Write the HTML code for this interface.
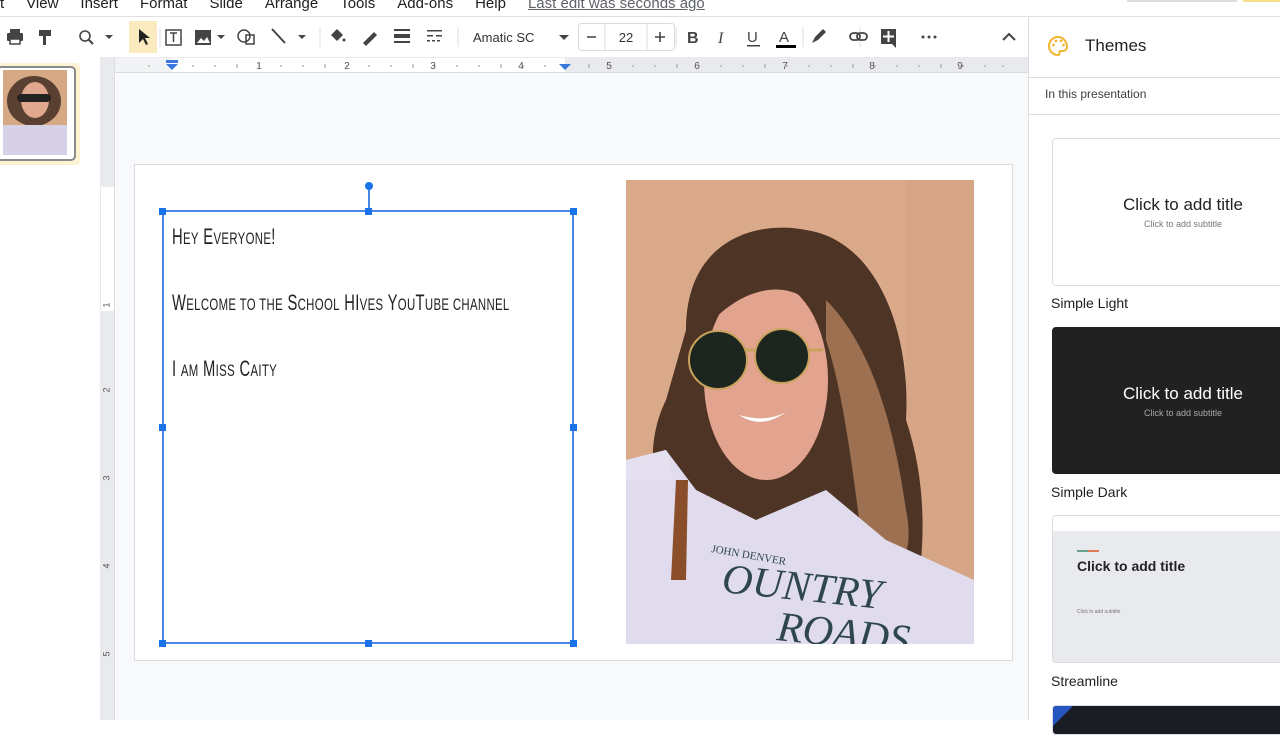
<!DOCTYPE html>
<html><head><meta charset="utf-8"><style>
*{margin:0;padding:0;box-sizing:border-box}
body{width:1280px;height:720px;overflow:hidden;background:#fff;font-family:"Liberation Sans",Arial,sans-serif;position:relative;color:#3c4043}
.a{position:absolute}
.menu{top:-5px;left:0;font-size:15px;color:#202124;white-space:nowrap}
.menu span{margin-right:22px}
.card{position:absolute;left:1052px;width:240px;border:1px solid #dadce0;border-radius:4px;overflow:hidden}
.lbl{position:absolute;left:1051px;font-size:14px;color:#202124}
.cat{font-size:17px;color:#202124;text-align:center}
.cas{font-size:9px;color:#777;text-align:center}
</style></head><body>
<div class="a menu"><span>t</span><span>View</span><span>Insert</span><span>Format</span><span>Slide</span><span>Arrange</span><span>Tools</span><span>Add-ons</span><span>Help</span><span style="text-decoration:underline;color:#5f6368;margin-left:0">Last edit was seconds ago</span></div>
<div class="a" style="left:1127px;top:0;width:110px;height:2px;background:#dadce0"></div>
<div class="a" style="left:1243px;top:0;width:37px;height:2px;background:#f6dd8a"></div>
<div class="a" style="left:0;top:16px;width:1280px;height:1px;background:#e0e0e0"></div>

<svg class="a" style="left:0;top:17px" width="1028" height="40">
<g fill="#444" stroke="#444">
<rect x="7" y="16" width="16" height="8" rx="1" stroke="none"/><rect x="10" y="12" width="10" height="4" stroke="none"/><rect x="10" y="22" width="10" height="5" fill="#fff" stroke="#444" stroke-width="1.5"/>
<rect x="39" y="13" width="12" height="6" stroke="none"/><rect x="43" y="19" width="3" height="9" stroke="none"/>
<circle cx="85" cy="19" r="5" fill="none" stroke-width="1.6"/><line x1="89" y1="23" x2="93" y2="27" stroke-width="2"/>
<path d="M105 18l4 4 4-4z" stroke="none"/>
</g>
<rect x="129" y="4" width="28" height="32" fill="#fbe9c0"/>
<path d="M139 12v14l4-4 3 6 2-1-3-6h5z" fill="#222"/>
<g fill="none" stroke="#444" stroke-width="1.5">
<rect x="166" y="13" width="15" height="15"/><path d="M170 16h7M173.5 16v9"/>
<circle cx="244" cy="19" r="6"/><rect x="246" y="18" width="8" height="9"/>
<line x1="272" y1="12" x2="285" y2="26" stroke-width="2"/>
<path d="M364 26l10-10 2 2-10 10z" fill="#444"/>
</g>
<g fill="#444">
<rect x="195" y="13" width="16" height="15"/><path d="M197 26l4-5 3 3 3-4 3 6z" fill="#fff"/>
<path d="M217 18l4 4 4-4zM298 18l4 4 4-4z"/>
<path d="M331 18l6-6 6 6-6 6z" /><circle cx="344" cy="23" r="1.5"/>
<rect x="394" y="12" width="16" height="2"/><rect x="394" y="17" width="16" height="4"/><rect x="394" y="24" width="16" height="2"/>
<rect x="427" y="13" width="15" height="1.5"/><rect x="427" y="18" width="6" height="1.5"/><rect x="436" y="18" width="6" height="1.5"/><rect x="427" y="23" width="3" height="1.5"/><rect x="432" y="23" width="3" height="1.5"/><rect x="437" y="23" width="3" height="1.5"/>
<path d="M559 18l5 5 5-5z"/>
</g>
<line x1="160" y1="10" x2="160" y2="30" stroke="#dadce0"/><line x1="320" y1="10" x2="320" y2="30" stroke="#dadce0"/><line x1="458" y1="10" x2="458" y2="30" stroke="#dadce0"/><line x1="676" y1="10" x2="676" y2="30" stroke="#dadce0"/><line x1="803" y1="10" x2="803" y2="30" stroke="#dadce0"/><line x1="860" y1="10" x2="860" y2="30" stroke="#dadce0"/>
<rect x="578.5" y="6.5" width="96" height="27" rx="3" fill="#fff" stroke="#dadce0"/>
<line x1="605" y1="7" x2="605" y2="33" stroke="#dadce0"/><line x1="647" y1="7" x2="647" y2="33" stroke="#dadce0"/>
<path d="M587 20h9M655 20h10M660 15v10" stroke="#444" stroke-width="1.6"/>
<text x="473" y="25" font-size="13" fill="#333" font-family="Liberation Sans">Amatic SC</text>
<text x="626" y="25" font-size="13" fill="#333" text-anchor="middle" font-family="Liberation Sans">22</text>
<text x="687" y="26" font-size="16" font-weight="bold" fill="#444" font-family="Liberation Sans">B</text>
<text x="718" y="26" font-size="16" font-style="italic" fill="#444" font-family="Liberation Serif">I</text>
<text x="747" y="25" font-size="15" fill="#444" font-family="Liberation Sans">U</text><rect x="747" y="28" width="13" height="1.5" fill="#444"/>
<text x="779" y="25" font-size="15" fill="#444" font-family="Liberation Sans">A</text><rect x="776" y="28" width="20" height="3" fill="#000"/>
<path d="M812 26l3-6 8-8 3 3-8 8z" fill="#444"/>
<g fill="none" stroke="#444" stroke-width="1.8"><rect x="850" y="16" width="10" height="7" rx="3.5"/><rect x="857" y="16" width="10" height="7" rx="3.5"/></g>
<rect x="881" y="12" width="15" height="15" fill="#444"/><path d="M888.5 14v11M883 19.5h11" stroke="#fff" stroke-width="2"/><path d="M892 27l4 4v-4z" fill="#444"/>
<circle cx="923" cy="20" r="1.5" fill="#444"/><circle cx="929" cy="20" r="1.5" fill="#444"/><circle cx="935" cy="20" r="1.5" fill="#444"/>
<path d="M1003 23l6-6 6 6" fill="none" stroke="#444" stroke-width="2"/>
</svg>

<div class="a" style="left:0;top:57px;width:100px;height:663px;background:#fff"></div>
<div class="a" style="left:-6px;top:63px;width:86px;height:102px;background:#fdf3d3;border-radius:4px"></div>
<div class="a" style="left:-4px;top:66px;width:80px;height:95px;border:2px solid #8a8a8a;border-radius:5px;background:#fff"></div>
<div class="a" style="left:3px;top:70px;width:64px;height:85px;background:#d6a884;overflow:hidden">
<div class="a" style="left:4px;top:6px;width:54px;height:50px;border-radius:50%;background:#5a4030"></div>
<div class="a" style="left:18px;top:12px;width:28px;height:36px;border-radius:50%;background:#e0a88e"></div>
<div class="a" style="left:14px;top:24px;width:34px;height:8px;background:#222;border-radius:4px"></div>
<div class="a" style="left:0;top:55px;width:64px;height:30px;background:#d7d1e6"></div>
</div>

<div class="a" style="left:100px;top:57px;width:15px;height:663px;background:#e8eaed;border-right:1px solid #dadce0"></div>
<div class="a" style="left:101px;top:187px;width:13px;height:124px;background:#fff"></div>
<div class="a" style="left:104px;top:385px;font-size:9px;transform:rotate(-90deg);color:#555">2</div>
<div class="a" style="left:104px;top:473px;font-size:9px;transform:rotate(-90deg);color:#555">3</div>
<div class="a" style="left:104px;top:561px;font-size:9px;transform:rotate(-90deg);color:#555">4</div>
<div class="a" style="left:104px;top:649px;font-size:9px;transform:rotate(-90deg);color:#555">5</div>
<div class="a" style="left:104px;top:300px;font-size:9px;transform:rotate(-90deg);color:#555">1</div>

<div class="a" style="left:115px;top:57px;width:913px;height:16px;background:#e8eaed;border-bottom:1px solid #dadce0"></div>
<div class="a" style="left:172px;top:58px;width:393px;height:14px;background:#fff"></div>
<div class="a" style="left:115px;top:58px;width:57px;height:14px;background:#f1f3f4"></div>
<svg class="a" style="left:115px;top:57px" width="913" height="16">
<g stroke="#999" stroke-width="1">
<path d="M34 8v2M56 8v2M78 8v2M100 8v2M122 7v4M144 8v2M166 8v2M188 8v2M210 7v4M232 8v2M254 8v2M276 8v2M298 7v4M320 8v2M342 8v2M364 8v2M386 7v4M408 8v2M430 8v2M474 7v4M496 8v2M518 8v2M540 8v2M562 7v4M584 8v2M606 8v2M628 8v2M650 7v4M672 8v2M694 8v2M716 8v2M738 7v4M760 8v2M782 8v2M804 8v2M826 7v4M848 8v2M870 8v2M888 8v2"/>
</g>
<rect x="51" y="3" width="12" height="3" fill="#3a78e0"/><path d="M51 7h12l-6 6z" fill="#3a78e0"/>
<path d="M444 7h12l-6 6z" fill="#3a78e0"/>
<g font-size="10" fill="#555" font-family="Liberation Sans" text-anchor="middle"><text x="144" y="12">1</text><text x="232" y="12">2</text><text x="318" y="12">3</text><text x="406" y="12">4</text><text x="494" y="12">5</text><text x="582" y="12">6</text><text x="670" y="12">7</text><text x="757" y="12">8</text><text x="845" y="12">9</text></g>
</svg>

<div class="a" style="left:116px;top:73px;width:912px;height:647px;background:#f8f9fa"></div>
<div class="a" style="left:134px;top:164px;width:879px;height:497px;background:#fff;border:1px solid #dadce0"></div>

<svg class="a" style="left:626px;top:180px" width="348" height="464" viewBox="0 0 348 464">
<rect width="348" height="464" fill="#d9a98a"/>
<rect x="280" width="68" height="464" fill="#d5a586"/>
<path d="M60 150 C60 60 130 40 180 50 C250 60 285 150 280 240 C300 300 300 360 290 420 L200 430 L60 360 C20 320 20 260 40 220 Z" fill="#4d3424"/>
<path d="M200 120 C250 170 270 260 280 330 C290 380 270 400 240 390 C230 320 220 220 200 160Z" fill="#9c7050"/>
<ellipse cx="140" cy="200" rx="62" ry="100" fill="#e2a48f"/>
<path d="M78 150 C90 80 150 70 190 130 C170 100 120 100 78 150Z" fill="#4d3424"/>
<circle cx="92" cy="180" r="29" fill="#1d261e" stroke="#c9a25e" stroke-width="2"/>
<circle cx="156" cy="176" r="27" fill="#1d261e" stroke="#c9a25e" stroke-width="2"/>
<path d="M119 170h11M183 170h14" stroke="#c9a25e" stroke-width="3"/>
<path d="M113 235 Q135 250 160 232 Q140 243 113 235Z" fill="#fff"/>
<path d="M0 280 L40 270 L70 310 L130 340 L200 310 L260 360 L348 400 L348 464 L0 464Z" fill="#e0dcee"/>
<path d="M0 280 L40 270 L48 300 L0 300Z" fill="#e4e0ef"/>
<path d="M50 300 L62 300 L60 400 L45 400Z" fill="#8a4e2a"/>
<text x="95" y="412" font-family="Liberation Serif" font-size="42" font-style="italic" fill="#2f4650" transform="rotate(6 95 412)">OUNTRY</text>
<text x="150" y="460" font-family="Liberation Serif" font-size="42" font-style="italic" fill="#2f4650" transform="rotate(6 150 460)">ROADS</text>
<text x="85" y="372" font-family="Liberation Serif" font-size="11" fill="#2f4650" transform="rotate(10 85 372)">JOHN DENVER</text>
</svg>

<div class="a" style="left:162px;top:210px;width:412px;height:434px;border:2px solid #4a86e8"></div>
<div class="a" style="left:368px;top:186px;width:2px;height:25px;background:#4a86e8"></div>
<div class="a" style="left:365px;top:182px;width:8px;height:8px;border-radius:50%;background:#1a73e8"></div>
<div class="a" style="left:159px;top:208px;width:7px;height:7px;background:#1a73e8"></div>
<div class="a" style="left:365px;top:208px;width:7px;height:7px;background:#1a73e8"></div>
<div class="a" style="left:570px;top:208px;width:7px;height:7px;background:#1a73e8"></div>
<div class="a" style="left:159px;top:424px;width:7px;height:7px;background:#1a73e8"></div>
<div class="a" style="left:570px;top:424px;width:7px;height:7px;background:#1a73e8"></div>
<div class="a" style="left:159px;top:640px;width:7px;height:7px;background:#1a73e8"></div>
<div class="a" style="left:365px;top:640px;width:7px;height:7px;background:#1a73e8"></div>
<div class="a" style="left:570px;top:640px;width:7px;height:7px;background:#1a73e8"></div>
<div class="a" style="left:172px;top:205px;font-family:'Liberation Sans Narrow','Liberation Sans',sans-serif;font-size:22px;color:#222;transform:scaleX(0.67);transform-origin:0 0;white-space:nowrap;letter-spacing:0.5px;line-height:64px">
<div>H<span style="font-size:17px">EY</span> E<span style="font-size:17px">VERYONE</span>!</div>
<div>W<span style="font-size:17px">ELCOME TO THE</span> S<span style="font-size:17px">CHOOL</span> HI<span style="font-size:17px">VES</span> Y<span style="font-size:17px">OU</span>T<span style="font-size:17px">UBE CHANNEL</span></div>
<div>I <span style="font-size:17px">AM</span> M<span style="font-size:17px">ISS</span> C<span style="font-size:17px">AITY</span></div>
</div>

<div class="a" style="left:1028px;top:17px;width:252px;height:703px;background:#fff;border-left:1px solid #dadce0"></div>
<svg class="a" style="left:1046px;top:34px" width="24" height="24"><path d="M12 3a9 9 0 1 0 0 18c1.5 0 2-1 1.5-2-.6-1 0-2 1.5-2h2a4 4 0 0 0 4-4c0-5.5-4-10-9-10z" fill="none" stroke="#f2b52e" stroke-width="2"/><circle cx="7.5" cy="11" r="1.4" fill="#f2b52e"/><circle cx="10" cy="7" r="1.4" fill="#f2b52e"/><circle cx="15" cy="7" r="1.4" fill="#f2b52e"/><circle cx="17.5" cy="11" r="1.4" fill="#f2b52e"/></svg>
<div class="a" style="left:1085px;top:36px;font-size:17px;color:#202124">Themes</div>
<div class="a" style="left:1029px;top:77px;width:251px;height:1px;background:#dadce0"></div>
<div class="a" style="left:1045px;top:87px;font-size:12px;color:#3c4043">In this presentation</div>
<div class="a" style="left:1029px;top:114px;width:251px;height:1px;background:#dadce0"></div>

<div class="card" style="top:138px;height:148px;background:#fff">
<div class="cat" style="margin-top:56px;width:260px">Click to add title</div>
<div class="cas" style="width:260px;margin-top:4px">Click to add subtitle</div></div>
<div class="lbl" style="top:295px">Simple Light</div>
<div class="card" style="top:327px;height:147px;background:#212121;border-color:#212121">
<div class="cat" style="margin-top:56px;width:260px;color:#fff">Click to add title</div>
<div class="cas" style="width:260px;margin-top:4px;color:#aaa">Click to add subtitle</div></div>
<div class="lbl" style="top:484px">Simple Dark</div>
<div class="card" style="top:515px;height:148px;background:#e8eaed">
<div style="height:15px;background:#fff"></div>
<div class="a" style="left:24px;top:34px;width:22px;height:2px;background:linear-gradient(90deg,#6aa38c 50%,#e07b5a 50%)"></div>
<div class="a" style="left:24px;top:42px;font-size:14px;font-weight:bold;color:#222">Click to add title</div>
<div class="a" style="left:24px;top:93px;font-size:5px;color:#777">Click to add subtitle</div></div>
<div class="lbl" style="top:673px">Streamline</div>
<div class="card" style="top:705px;height:30px;background:#1a1c24"><div style="width:0;height:0;border-top:20px solid #2555c0;border-right:20px solid transparent"></div></div>
</body></html>
